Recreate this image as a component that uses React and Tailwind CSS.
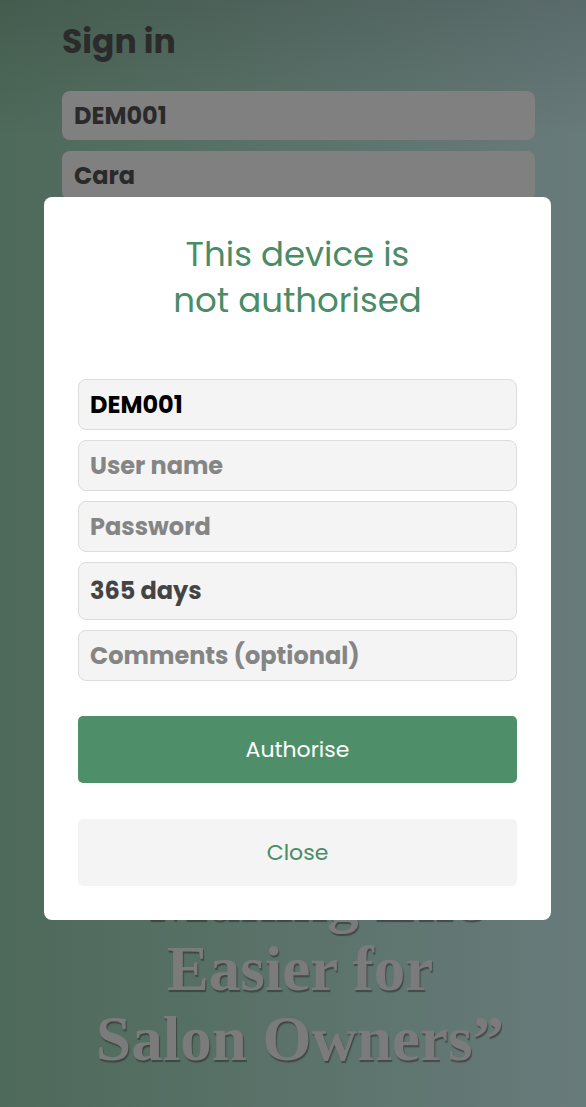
import React from "react";

const sans = { fontFamily: "Poppins, 'Noto Sans', Inter, sans-serif" };

function Field({ value, placeholder, tall, strong }) {
  return (
    <div
      className={`flex items-center rounded-lg border border-[#dcdcdc] bg-[#f4f4f4] px-[11px] ${tall ? "h-[58px]" : "h-[51px]"}`}
    >
      {value ? (
        <span className={`text-[24px] font-bold ${strong ? "text-black" : "text-[#444444]"}`}>{value}</span>
      ) : (
        <span className="text-[24px] font-bold text-[#858585]">{placeholder}</span>
      )}
    </div>
  );
}

export default function App() {
  return (
    <div className="relative h-[1107px] w-full overflow-hidden bg-gradient-to-r from-[#4e6a5a] to-[#687b7b]" style={sans}>
      <div className="pointer-events-none absolute inset-x-0 top-0 h-[140px] bg-gradient-to-b from-[#00000022] to-transparent" />
      <div className="relative flex flex-col pl-[62px] pr-[51px] pt-[20px]">
        <h1 className="text-[33px] font-bold leading-[44px] text-[#2b2b2b]">Sign in</h1>
        <div className="mt-[27px] flex flex-col gap-[11px]">
          <div className="flex h-[49px] items-center rounded-lg bg-[#808080] px-[12px] text-[24px] font-bold text-[#2a2a2a]">DEM001</div>
          <div className="flex h-[49px] items-center rounded-lg bg-[#808080] px-[12px] text-[24px] font-bold text-[#2a2a2a]">Cara</div>
        </div>
      </div>
      <div
        className="relative mt-[664px] pl-[14px] text-center text-[63px] font-bold leading-[70px] text-[#7b7b7b]"
        style={{ fontFamily: "'Liberation Serif', serif", textShadow: "1px 2px 1px rgba(40,40,40,0.55)" }}
      >
        <div>“Making Life</div>
        <div>Easier for</div>
        <div>Salon Owners”</div>
      </div>

      <div className="absolute left-[44px] top-[197px] w-[507px] rounded-lg bg-white px-[34px] pt-[34px] pb-[34px]">
        <h2 className="text-center text-[34px] font-normal leading-[46px] text-[#4a8c66]">
          This device is
          <br />
          not authorised
        </h2>
        <div className="mt-[56px] flex flex-col gap-[10px]">
          <Field value="DEM001" strong />
          <Field placeholder="User name" />
          <Field placeholder="Password" />
          <Field value="365 days" tall />
          <Field placeholder="Comments (optional)" />
        </div>
        <button className="mt-[35px] flex h-[67px] w-full items-center justify-center rounded-[5px] bg-[#4e8f69] text-[22px] text-white">
          Authorise
        </button>
        <button className="mt-[36px] flex h-[67px] w-full items-center justify-center rounded-[5px] bg-[#f4f4f4] text-[22px] text-[#4a8c66]">
          Close
        </button>
      </div>
    </div>
  );
}
